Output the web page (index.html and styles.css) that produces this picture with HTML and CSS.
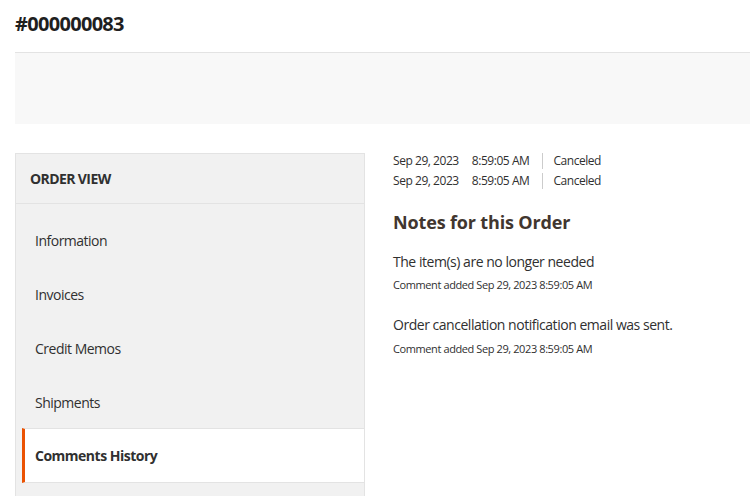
FILE: index.html
```html
<!DOCTYPE html>
<html lang="en">
<head>
<meta charset="utf-8">
<title>#000000083</title>
<link rel="stylesheet" href="styles.css">
</head>
<body>
<div class="page">
  <h1 class="page-title">#000000083</h1>
  <div class="actions-bar"></div>
  <div class="main">
    <nav class="side-nav">
      <div class="side-nav-title">Order View</div>
      <ul class="side-nav-items">
        <li class="side-nav-item"><span class="side-nav-link">Information</span></li>
        <li class="side-nav-item"><span class="side-nav-link">Invoices</span></li>
        <li class="side-nav-item"><span class="side-nav-link">Credit Memos</span></li>
        <li class="side-nav-item"><span class="side-nav-link">Shipments</span></li>
        <li class="side-nav-item active"><span class="side-nav-link">Comments History</span></li>
      </ul>
    </nav>
    <section class="content">
      <ul class="status-list">
        <li class="status-row"><span class="s-date">Sep 29, 2023</span><span class="s-time">8:59:05 AM</span><span class="s-status">Canceled</span></li>
        <li class="status-row"><span class="s-date">Sep 29, 2023</span><span class="s-time">8:59:05 AM</span><span class="s-status">Canceled</span></li>
      </ul>
      <h2 class="notes-title">Notes for this Order</h2>
      <div class="note first">
        <p class="note-text">The item(s) are no longer needed</p>
        <p class="note-meta">Comment added Sep 29, 2023 8:59:05 AM</p>
      </div>
      <div class="note">
        <p class="note-text">Order cancellation notification email was sent.</p>
        <p class="note-meta">Comment added Sep 29, 2023 8:59:05 AM</p>
      </div>
    </section>
  </div>
</div>
</body>
</html>
```

FILE: styles.css
```css
html, body {
  margin: 0;
  padding: 0;
  background: #ffffff;
  overflow: hidden;
}

body {
  font-family: "Open Sans", "Liberation Sans", sans-serif;
  font-weight: 500;
  color: #303030;
}

.page {
  padding-left: 15px;
}

.page-title {
  margin: 0;
  padding-top: 12px;
  height: 24px;
  font-size: 20px;
  line-height: 24px;
  font-weight: 700;
  letter-spacing: -0.7px;
  color: #1f1f1f;
}

.actions-bar {
  margin-top: 16px;
  height: 71px;
  border-top: 1px solid #e3e3e3;
  background: #f8f8f8;
}

.main {
  display: flex;
  align-items: flex-start;
  gap: 28px;
  margin-top: 27px;
}

.side-nav {
  flex: 0 0 350px;
  box-sizing: border-box;
  margin-top: 2px;
  border: 1px solid #e3e3e3;
  background: #f1f1f1;
}

.side-nav-title {
  height: 49px;
  display: flex;
  align-items: center;
  padding-left: 14px;
  border-bottom: 1px solid #e3e3e3;
  font-size: 14px;
  font-weight: 700;
  letter-spacing: -0.6px;
  text-transform: uppercase;
  color: #303030;
}

.side-nav-items {
  list-style: none;
  margin: 0;
  padding: 9px 0 20px;
}

.side-nav-item {
  margin-left: 6px;
  height: 52px;
  border-left: 3px solid transparent;
  border-top: 1px solid transparent;
  border-bottom: 1px solid transparent;
  display: flex;
  align-items: center;
}

.side-nav-link {
  padding-left: 10px;
  font-size: 14px;
  letter-spacing: -0.5px;
  color: #303030;
}

.side-nav-item.active {
  margin-top: -1px;
  height: 53px;
  background: #ffffff;
  border-left-color: #eb5202;
  border-top-color: #e3e3e3;
  border-bottom-color: #e3e3e3;
}

.side-nav-item.active .side-nav-link {
  font-weight: 700;
  letter-spacing: -0.5px;
}

.content {
  flex: 1;
  min-width: 0;
}

.status-list {
  list-style: none;
  margin: 0;
  padding: 0;
}

.status-row {
  display: flex;
  align-items: center;
  height: 20px;
  font-size: 12px;
  line-height: 20px;
  letter-spacing: -0.45px;
  color: #303030;
}

.s-date {
  margin-right: 13px;
}

.s-time {
  padding-right: 13px;
}

.s-status {
  border-left: 1px solid #cccccc;
  padding-left: 10px;
  line-height: 16px;
}

.notes-title {
  margin: 19px 0 0;
  font-size: 18px;
  line-height: 24px;
  font-weight: 700;
  letter-spacing: -0.15px;
  color: #41362f;
}

.note {
  margin-top: 22px;
}

.note.first {
  margin-top: 18px;
}

.note-text {
  margin: 0;
  font-size: 14px;
  line-height: 20px;
  letter-spacing: -0.47px;
  color: #303030;
}

.note-meta {
  margin: 5px 0 0;
  font-size: 11px;
  line-height: 16px;
  letter-spacing: -0.4px;
  color: #303030;
}

.note + .note .note-meta {
  margin-top: 6px;
}
```
